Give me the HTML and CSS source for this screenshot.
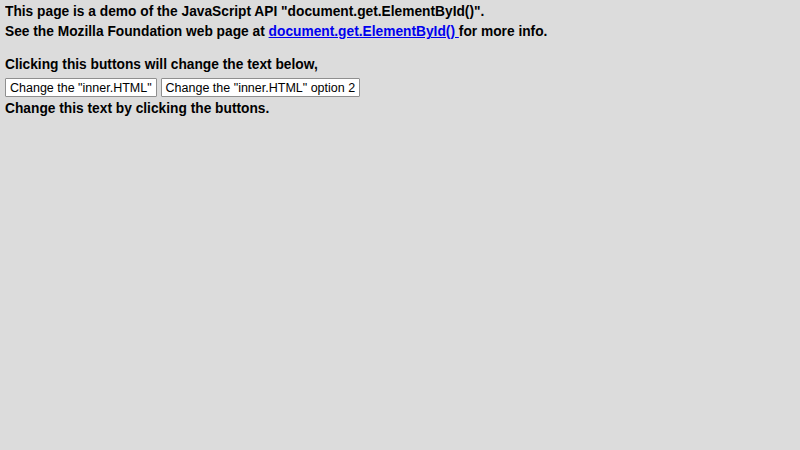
FILE: index.html
```html
<!DOCTYPE html>
<html>
<head>
<meta charset="utf-8">
<link rel="stylesheet" href="styles.css">
</head>
<body>
<div class="intro">
  <div class="line">This page is a demo of the JavaScript API "document.get.ElementById()".</div>
  <div class="line">See the Mozilla Foundation web page at <a href="#">document.get.ElementById() </a>for more info.</div>
</div>
<div class="line">Clicking this buttons will change the text below,</div>
<div class="buttons">
  <button class="btn">Change the "inner.HTML"</button>
  <button class="btn">Change the "inner.HTML" option 2</button>
</div>
<div class="line">Change this text by clicking the buttons.</div>
</body>
</html>
```
FILE: styles.css
```css
html { background: #dcdcdc; }
body {
  margin: 2px 5px;
  font-family: "Liberation Sans", Arial, sans-serif;
  font-weight: bold;
  font-size: 13.75px;
  color: #000;
}
.line { line-height: 20px; }
.intro { margin-bottom: 13px; }
a { color: #0000ee; text-decoration: underline; }
.buttons { display: flex; gap: 4px; margin: 3px 0 2px; }
.btn {
  font-family: "Liberation Sans", Arial, sans-serif;
  font-size: 12.5px;
  font-weight: normal;
  background: #fff;
  border: 1px solid #8f8f8f;
  border-radius: 1px;
  padding: 1px 4px;
  height: 19px;
  color: #000;
}
```
